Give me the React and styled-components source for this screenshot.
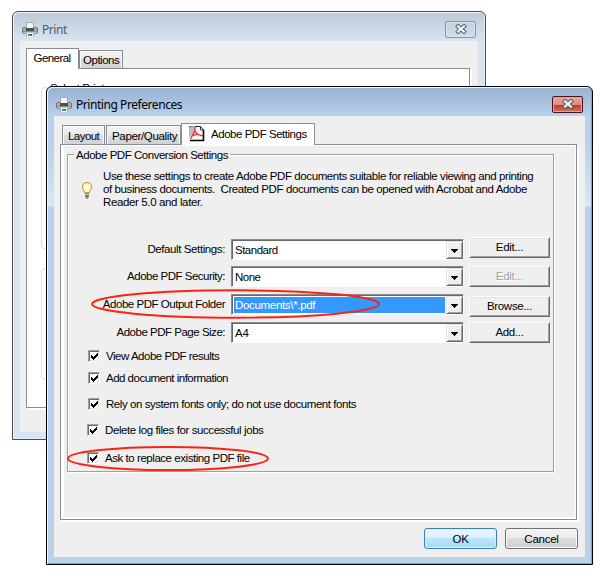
import React from "react";
import styled, { createGlobalStyle } from "styled-components";

const GlobalStyle = createGlobalStyle`
  * {
    box-sizing: border-box;
  }
  body {
    margin: 0;
    background: #fff;
    font-family: "Liberation Sans", Arial, sans-serif;
    font-size: 11.5px;
    letter-spacing: -0.4px;
    color: #000;
  }
`;

const Desktop = styled.div`
  position: relative;
  width: 614px;
  height: 582px;
  overflow: hidden;
`;

const Window = styled.div`
  position: absolute;
  left: ${(p) => p.$x}px;
  top: ${(p) => p.$y}px;
  width: ${(p) => p.$w}px;
  height: ${(p) => p.$h}px;
  display: flex;
  flex-direction: column;
  padding: 0 7px 7px;
  border: 1px solid ${(p) => (p.$active ? "#000" : "#4b4b4d")};
  border-radius: 6px 6px 0 0;
  background: ${(p) =>
    p.$active
      ? "linear-gradient(#97b1d0 0, #b9d1ea 29px, #b9d1ea 60px, #d9e6f4 118px, #dbe8f5 119px, #b9d1ea 120px)"
      : "linear-gradient(#bccad7 0, #d7e4f2 29px)"};
  box-shadow: ${(p) =>
    p.$active
      ? "inset 1px 1px 0 #f0f6fc, inset -1px -1px 0 #3fc0dc"
      : "inset 1px 1px 0 #eef4fa, inset -1px -1px 0 #e4eef8"};
`;

const TitleBar = styled.div`
  flex: none;
  height: 29px;
  display: flex;
  align-items: center;
  padding: 6px 2px 0 2px;
`;

const Title = styled.div`
  flex: 1;
  margin-left: 4px;
  font-family: "Noto Sans", "Open Sans", sans-serif;
  font-size: 12px;
  line-height: 16px;
  letter-spacing: -0.44px;
  color: ${(p) => (p.$active ? "#000" : "#505860")};
`;

const CloseButton = styled.div`
  width: 31px;
  height: 17px;
  margin-top: -1px;
  display: flex;
  align-items: center;
  justify-content: center;
  border: 1px solid ${(p) => (p.$active ? "#471520" : "#8592ac")};
  border-radius: 2px;
  background: ${(p) =>
    p.$active
      ? "linear-gradient(#e9a99c 0, #dc8b7c 50%, #b8391f 50%, #d3765c 100%)"
      : "linear-gradient(#c3d0de, #cfdcea)"};
  box-shadow: inset 0 0 0 1px ${(p) => (p.$active ? "#e6a498" : "#d7e2ee")};
`;

const Client = styled.div`
  flex: 1;
  display: flex;
  flex-direction: column;
  background: #efefef;
  padding: 7px 8px 0 6px;
`;

const Tabs = styled.div`
  display: flex;
  align-items: flex-end;
  height: ${(p) => p.$h}px;
  padding-left: ${(p) => p.$indent || 0}px;
`;

const Tab = styled.div`
  width: ${(p) => p.$w}px;
  height: ${(p) => (p.$active ? p.$h + 1 : p.$h)}px;
  margin-bottom: ${(p) => (p.$active ? -1 : 0)}px;
  z-index: ${(p) => (p.$active ? 1 : 0)};
  display: flex;
  align-items: center;
  padding-left: ${(p) => p.$pl}px;
  padding-top: 1px;
  gap: 6px;
  white-space: nowrap;
  letter-spacing: ${(p) => p.$ls}px;
  border: 1px solid #898c95;
  border-bottom: 0;
  margin-left: ${(p) => p.$ml || 0}px;
  background: ${(p) =>
    p.$active ? "#fff" : "linear-gradient(#f2f2f2 0, #ebebeb 50%, #dddddd 50%, #d2d2d2)"};
  box-shadow: ${(p) => (p.$active ? "none" : "inset 1px 1px 0 #fafafa, inset -1px 0 0 #fafafa")};
  ${(p) => p.$active && "padding-bottom: 3px;"}
`;

const Pane = styled.div`
  flex: none;
  height: ${(p) => p.$h}px;
  border: 1px solid #898c95;
  background: #fff;
  box-shadow: 2px 2px 0 #fff;
  padding: ${(p) => p.$pad};
`;

const FaintGroup = styled.div`
  height: ${(p) => p.$h}px;
  margin-bottom: 19px;
  border: 1px solid #d5dfe5;
  border-radius: 4px;
`;

const FaintLegend = styled.span`
  display: block;
  width: fit-content;
  margin: -7px 0 0 5px;
  padding: 0 3px;
  line-height: 14px;
  background: #fff;
`;

const Page = styled.div`
  height: 100%;
  background: #efefef;
  padding: 8px 0 0 3px;
`;

const Group = styled.div`
  width: 487px;
  height: 318px;
  border: 1px solid #a0a0a0;
  box-shadow: inset 1px 1px 0 #fff, 1px 1px 0 #fff;
`;

const Legend = styled.div`
  width: 156px;
  height: 14px;
  margin: -7px 0 0 6px;
  padding-left: 2px;
  line-height: 15px;
  white-space: nowrap;
  letter-spacing: -0.47px;
  background: #efefef;
`;

const Hint = styled.div`
  display: flex;
  align-items: center;
  height: 39px;
  margin: 8px 0 0 12px;
`;

const HintText = styled.div`
  margin-left: 9px;
  line-height: 13px;
  white-space: pre;
`;

const Line = styled.div`
  letter-spacing: ${(p) => p.$ls}px;
`;

const Fields = styled.div`
  margin-top: 28px;
`;

const Field = styled.div`
  display: grid;
  grid-template-columns: 158px 233px 81px;
  column-gap: 5px;
  align-items: start;
  height: 28px;
`;

const FieldLabel = styled.div`
  padding-right: 1px;
  margin-top: ${(p) => p.$mt}px;
  line-height: 15px;
  text-align: right;
  white-space: nowrap;
  letter-spacing: ${(p) => p.$ls}px;
`;

const Select = styled.div`
  height: 21px;
  margin-top: ${(p) => p.$mt}px;
  display: flex;
  background: #fff;
  border: 1px solid;
  border-color: #8a8a8a #fff #fff #8a8a8a;
  box-shadow: inset 1px 1px 0 #696969;
`;

const Value = styled.div`
  flex: 1;
  margin: 2px 1px 1px 2px;
  padding-left: 1px;
  line-height: 17px;
  color: ${(p) => (p.$selected ? "#fff" : "#000")};
  background: ${(p) => (p.$selected ? "#3399ff" : "#fff")};
  letter-spacing: ${(p) => p.$ls}px;
`;

const Arrow = styled.div`
  width: 17px;
  margin-top: 1px;
  padding-top: 1px;
  display: flex;
  align-items: center;
  justify-content: center;
  background: #efefef;
  border: 1px solid;
  border-color: #e3e3e3 #696969 #696969 #e3e3e3;
  box-shadow: inset 1px 1px 0 #fff, inset -1px -1px 0 #a0a0a0;
`;

const ClassicButton = styled.div`
  height: 21px;
  margin-top: ${(p) => p.$mt || 0}px;
  line-height: 18px;
  text-align: center;
  background: #efefef;
  border: 1px solid;
  border-color: #fff #696969 #696969 #fff;
  box-shadow: inset 1px 1px 0 #e3e3e3, inset -1px -1px 0 #a0a0a0;
  color: ${(p) => (p.$disabled ? "#a0a0a0" : "#000")};
  text-shadow: ${(p) => (p.$disabled ? "1px 1px 0 #fff" : "none")};
  letter-spacing: -0.3px;
`;

const Option = styled.div`
  display: flex;
  align-items: center;
  height: 14px;
  margin-bottom: ${(p) => p.$mb}px;
  padding-left: ${(p) => p.$pl}px;
  white-space: nowrap;
  letter-spacing: ${(p) => p.$ls}px;
`;

const Box = styled.div`
  width: 12px;
  height: 12px;
  margin-right: 6px;
  display: flex;
  align-items: center;
  justify-content: center;
  background: #fff;
  border: 1px solid;
  border-color: #a0a0a0 #fff #fff #a0a0a0;
  box-shadow: inset 1px 1px 0 #696969, inset -1px -1px 0 #e3e3e3;
`;

const Footer = styled.div`
  display: flex;
  justify-content: flex-end;
  gap: 8px;
  margin: 8px -1px 0 0;
`;

const DialogButton = styled.div`
  width: 73px;
  height: 21px;
  line-height: 20px;
  text-align: center;
  border: 1px solid ${(p) => (p.$primary ? "#3c7fb1" : "#707070")};
  border-radius: 3px;
  background: ${(p) =>
    p.$primary
      ? "linear-gradient(#e9f6fd 0, #d9f0fc 48%, #bde6fd 48%, #a6d9f4)"
      : "linear-gradient(#f2f2f2 0, #ebebeb 48%, #dddddd 48%, #cfcfcf)"};
  box-shadow: inset 0 0 0 1px ${(p) => (p.$primary ? "#d5f1fd" : "#f8f8f8")};
  letter-spacing: -0.25px;
`;

const Marks = styled.svg`
  position: absolute;
  left: 0;
  top: 0;
`;

function PrinterIcon() {
  return (
    <svg width="16" height="16" viewBox="0 0 16 16" shapeRendering="crispEdges">
      <path d="M4 0h8v6H4z" fill="#a3a9ae" />
      <path d="M5 1h6v5H5z" fill="#f4f7f9" />
      <path d="M1 5h3v1h8V5h3v1h1v5h-1v1H1v-1H0V6h1z" fill="#77797c" />
      <path d="M1 6h3v3H1zM12 6h3v3h-3z" fill="#a9abad" />
      <path d="M4 6h8v3H4z" fill="#4b4d50" />
      <path d="M1 9h14v1H1z" fill="#8b8d90" />
      <path d="M1 10h14v1H1z" fill="#c3c5c7" />
      <path d="M13 9h1v1h-1z" fill="#63d54a" />
      <path d="M3 11h10v1h-1v3H4v-3H3z" fill="#a5a9ad" />
      <path d="M5 11h6v4H5z" fill="#f6fafc" />
      <path d="M6 12h2v2H6z" fill="#2f87c0" />
      <path d="M8 12h2v2H8z" fill="#2b5d86" />
      <path d="M8 13h1v1H8z" fill="#57bd8e" />
    </svg>
  );
}

function CloseIcon() {
  return (
    <svg width="12" height="10" viewBox="0 0 12 10">
      <path d="M3 2.300l6 5.400M9 2.300L3 7.700" stroke="#4d5468" strokeWidth="4" strokeLinecap="square" />
      <path d="M3 2.300l6 5.400M9 2.300L3 7.700" stroke="#f7f7f7" strokeWidth="2.200" strokeLinecap="square" />
    </svg>
  );
}

function PdfIcon() {
  return (
    <svg width="16" height="16" viewBox="0 0 16 16">
      <path d="M0 1h12l3 3v11H0z" fill="#f6f6f6" />
      <path d="M0 0h6v6L0 12z" fill="#bdbdbd" />
      <path d="M14.500 4v11M1 14.500h14" fill="none" stroke="#000" strokeWidth="1.600" />
      <path d="M6 .5h5.500l3 3.500" fill="none" stroke="#222" />
      <path d="M11.500 1v3H15" fill="none" stroke="#222" strokeWidth=".8" />
      <path d="M0 .5h4M.5 0v2" stroke="#2aa198" />
      <path d="M6 1v4L1.500 13M6 5l3 3.500 5 1.500M4 9.500l5-1.500" fill="none" stroke="#e81123" strokeWidth="1.100" />
    </svg>
  );
}

const Bulb = styled.svg`
  flex: none;
  margin-top: 1px;
`;

function BulbIcon() {
  return (
    <Bulb width="14" height="18" viewBox="0 0 14 18">
      <path
        d="M7 1.500c3 0 4.700 2 4.700 4.500 0 2.300-2 3.400-2.400 5.800H4.700C4.300 9.400 2.300 8.300 2.300 6 2.300 3.500 4 1.500 7 1.500z"
        fill="#fff8b8"
        stroke="#b58f2c"
      />
      <path d="M5.500 4.500c1-1 3-.5 3 1.500s-.8 3-1 5h-1.500c0-2-1.500-4-.5-6.500z" fill="#fffef2" />
      <path d="M5 12h4v4.500H5z" fill="#7b7b7b" />
      <path d="M5 13.500h4" stroke="#c9c9c9" />
      <path d="M6 17h2" stroke="#555" />
    </Bulb>
  );
}

function ArrowIcon() {
  return (
    <svg width="7" height="4" viewBox="0 0 7 4" shapeRendering="crispEdges">
      <path d="M0 0h7v1H6v1H5v1H4v1H3V3H2V2H1V1H0z" />
    </svg>
  );
}

function CheckIcon() {
  return (
    <svg width="7" height="7" viewBox="0 0 7 7" shapeRendering="crispEdges">
      <path d="M0 2h1v1h1v1h1V3h1V2h1V1h1V0h1v3H6v1H5v1H4v1H3v1H2V6H1V5H0z" />
    </svg>
  );
}

const fields = [
  { label: "Default Settings:", value: "Standard", button: "Edit...", mt: 5, sm: 2, ls: -0.4, vls: -0.5 },
  { label: "Adobe PDF Security:", value: "None", button: "Edit...", disabled: true, mt: 4, sm: 1, bm: 1, ls: -0.5, vls: -0.5 },
  { label: "Adobe PDF Output Folder", value: "Documents\\*.pdf", button: "Browse...", selected: true, mt: 4, sm: 1, bm: 3, ls: -0.47, vls: -0.32 },
  { label: "Adobe PDF Page Size:", value: "A4", button: "Add...", mt: 4, sm: 1, bm: 1, ls: -0.49, vls: -0.2 },
];

const options = [
  { label: "View Adobe PDF results", pl: 20, mb: 8, ls: -0.48 },
  { label: "Add document information", pl: 20, mb: 12, ls: -0.51 },
  { label: "Rely on system fonts only; do not use document fonts", pl: 20, mb: 12, ls: -0.44 },
  { label: "Delete log files for successful jobs", pl: 19, mb: 14, ls: -0.41 },
  { label: "Ask to replace existing PDF file", pl: 19, mb: 0, ls: -0.45 },
];

function PrintWindow() {
  return (
    <Window $x={12} $y={11} $w={474} $h={429}>
      <TitleBar>
        <PrinterIcon />
        <Title>Print</Title>
        <CloseButton>
          <CloseIcon />
        </CloseButton>
      </TitleBar>
      <Client>
        <Tabs $h={20}>
          <Tab $active $w={53} $h={20} $pl={6.5} $ls={-0.55}>General</Tab>
          <Tab $w={44} $h={18} $pl={3} $ls={-0.48}>Options</Tab>
        </Tabs>
        <Pane $h={340} $pad="18px 14px 0">
          <FaintGroup $h={162}>
            <FaintLegend>Select Printer</FaintLegend>
          </FaintGroup>
          <FaintGroup $h={112} />
        </Pane>
      </Client>
    </Window>
  );
}

function PreferencesWindow() {
  return (
    <Window $active $x={46} $y={86} $w={547} $h={479}>
      <TitleBar>
        <PrinterIcon />
        <Title $active>Printing Preferences</Title>
        <CloseButton $active>
          <CloseIcon />
        </CloseButton>
      </TitleBar>
      <Client>
        <Tabs $h={21} $indent={2}>
          <Tab $w={43} $h={19} $pl={5} $ls={-0.55}>Layout</Tab>
          <Tab $w={75} $h={19} $pl={5} $ml={1} $ls={-0.34}>Paper/Quality</Tab>
          <Tab $active $w={134} $h={21} $pl={7} $ls={-0.47}>
            <PdfIcon />
            Adobe PDF Settings
          </Tab>
        </Tabs>
        <Pane $h={376} $pad="1px 1px 2px 3px">
          <Page>
            <Group>
              <Legend>Adobe PDF Conversion Settings</Legend>
              <Hint>
                <BulbIcon />
                <HintText>
                  <Line $ls={-0.42}>Use these settings to create Adobe PDF documents suitable for reliable viewing and printing</Line>
                  <Line $ls={-0.405}>of business documents.  Created PDF documents can be opened with Acrobat and Adobe</Line>
                  <Line $ls={-0.37}>Reader 5.0 and later.</Line>
                </HintText>
              </Hint>
              <Fields>
                {fields.map((f) => (
                  <Field key={f.label}>
                    <FieldLabel $mt={f.mt} $ls={f.ls}>{f.label}</FieldLabel>
                    <Select $mt={f.sm}>
                      <Value $selected={f.selected} $ls={f.vls}>{f.value}</Value>
                      <Arrow>
                        <ArrowIcon />
                      </Arrow>
                    </Select>
                    <ClassicButton $mt={f.bm} $disabled={f.disabled}>{f.button}</ClassicButton>
                  </Field>
                ))}
              </Fields>
              {options.map((o) => (
                <Option key={o.label} $pl={o.pl} $mb={o.mb} $ls={o.ls}>
                  <Box>
                    <CheckIcon />
                  </Box>
                  {o.label}
                </Option>
              ))}
            </Group>
          </Page>
        </Pane>
        <Footer>
          <DialogButton $primary>OK</DialogButton>
          <DialogButton>Cancel</DialogButton>
        </Footer>
      </Client>
    </Window>
  );
}

function App() {
  return (
    <>
      <GlobalStyle />
      <Desktop>
        <PrintWindow />
        <PreferencesWindow />
        <Marks width="614" height="582" fill="none" stroke="#fb2412" strokeWidth="2">
          <ellipse cx="235.500" cy="304" rx="143.500" ry="13.700" />
          <ellipse cx="168" cy="458.500" rx="100" ry="11.500" />
        </Marks>
      </Desktop>
    </>
  );
}

export default App;
